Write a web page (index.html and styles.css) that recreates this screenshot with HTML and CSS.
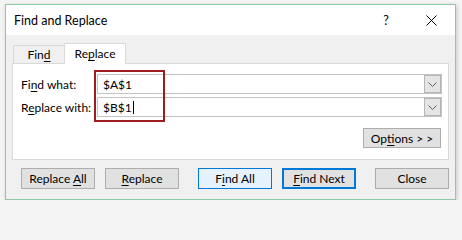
FILE: index.html
```html
<!DOCTYPE html>
<html>
<head>
<meta charset="utf-8">
<link rel="stylesheet" href="styles.css">
</head>
<body>
<div class="window">
  <div class="titlebar">
    <span class="title">Find and Replace</span>
    <span class="help">?</span>
    <svg class="close" width="11" height="11" viewBox="0 0 11 11"><path d="M0.5 0.5 L10.5 10.5 M10.5 0.5 L0.5 10.5" stroke="#000" stroke-width="1" fill="none"/></svg>
  </div>
  <div class="content">
    <div class="tabs">
      <div class="tab tab-find"><span>Fin<u>d</u></span></div>
      <div class="tab tab-replace"><span>Re<u>p</u>lace</span></div>
    </div>
    <div class="panel">
      <div class="row">
        <span class="label">Fi<u>n</u>d what:</span>
        <div class="combo">
          <span class="value">$A$1</span>
          <span class="drop"><svg width="9" height="5" viewBox="0 0 9 5"><path d="M0.5 0.5 L4.5 4.5 L8.5 0.5" stroke="#606060" fill="none"/></svg></span>
        </div>
      </div>
      <div class="row">
        <span class="label">R<u>e</u>place with:</span>
        <div class="combo">
          <span class="value">$B$1<span class="caret"></span></span>
          <span class="drop"><svg width="9" height="5" viewBox="0 0 9 5"><path d="M0.5 0.5 L4.5 4.5 L8.5 0.5" stroke="#606060" fill="none"/></svg></span>
        </div>
      </div>
      <div class="options-row">
        <button class="btn btn-options"><span>Op<u>t</u>ions &gt; &gt;</span></button>
      </div>
    </div>
    <div class="buttons">
      <button class="btn"><span>Replace <u>A</u>ll</span></button>
      <button class="btn gap-s"><span><u>R</u>eplace</span></button>
      <button class="btn btn-hover gap-l"><span>F<u>i</u>nd All</span></button>
      <button class="btn btn-default gap-s"><span><u>F</u>ind Next</span></button>
      <button class="btn gap-l"><span>Close</span></button>
    </div>
  </div>
  <div class="highlight"></div>
</div>
</body>
</html>
```
FILE: styles.css
```css
* { box-sizing: border-box; }

body {
  margin: 0;
  background: #f4f4f4;
  font-family: "Segoe UI", Lato, "Open Sans", sans-serif;
  font-size: 12px;
  color: #000;
}

u { text-decoration: underline; text-underline-offset: 2px; }

.window {
  position: relative;
  margin: 4px 0 0 5px;
  width: 451px;
  height: 196px;
  border: 1px solid #8ccaa4;
  background: #f0f0f0;
  box-shadow: 1px 1px 4px rgba(0, 0, 0, 0.18);
}

.titlebar {
  height: 30px;
  background: #fff;
  display: flex;
  align-items: center;
  padding-left: 8px;
}

.title { flex: 1; font-size: 12.5px; }

.help {
  width: 12px;
  text-align: center;
  margin-right: 34px;
  font-size: 12.5px;
}

.close { margin-right: 18px; }

.content { padding: 8px 6px 0 6px; }

.tabs {
  display: flex;
  align-items: flex-start;
  height: 21px;
  margin-left: 1px;
  margin-bottom: -1px;
  position: relative;
  z-index: 1;
}

.tab {
  display: flex;
  align-items: center;
  justify-content: center;
  border: 1px solid #d9d9d9;
  border-bottom: none;
}

.tab-find {
  width: 51px;
  height: 18px;
  margin-top: 2px;
  border-right: none;
  background: #f0f0f0;
}

.tab-replace {
  width: 62px;
  height: 21px;
  background: #fff;
  padding-bottom: 1px;
}

.panel {
  background: #fff;
  border: 1px solid #d9d9d9;
  padding: 10px 6px 11px 8px;
}

.row {
  display: flex;
  align-items: center;
  height: 20px;
}

.row + .row { margin-top: 3px; }

.label { width: 76px; }

.combo {
  flex: 1;
  height: 20px;
  border: 1px solid #c3c3c3;
  display: flex;
  align-items: center;
  background: #fff;
}

.value {
  flex: 1;
  padding-left: 5px;
  display: flex;
  align-items: center;
}

.caret {
  display: inline-block;
  width: 1px;
  height: 13px;
  background: #000;
  margin-left: 1px;
}

.drop {
  width: 17px;
  height: 18px;
  background: #e5e5e5;
  border: 1px solid #b5b5b5;
  display: flex;
  align-items: center;
  justify-content: center;
}

.options-row {
  display: flex;
  justify-content: flex-end;
  margin-top: 11px;
  padding-right: 1px;
}

.btn {
  font-family: inherit;
  font-size: 12px;
  color: #000;
  background: #e1e1e1;
  border: 1px solid #adadad;
  width: 74px;
  height: 21px;
  padding: 0;
  display: flex;
  align-items: center;
  justify-content: center;
}

.btn-options { width: 78px; height: 20px; }

.buttons {
  display: flex;
  margin-top: 8px;
  padding-left: 9px;
}

.gap-s { margin-left: 10px; }
.gap-l { margin-left: 19px; }

.btn-hover {
  background: #e5f1fb;
  border-color: #0078d7;
}

.btn-default {
  border: 2px solid #0078d7;
}

.highlight {
  position: absolute;
  left: 88px;
  top: 65px;
  width: 71px;
  height: 52px;
  border: 2px solid #9e1c22;
}
```
